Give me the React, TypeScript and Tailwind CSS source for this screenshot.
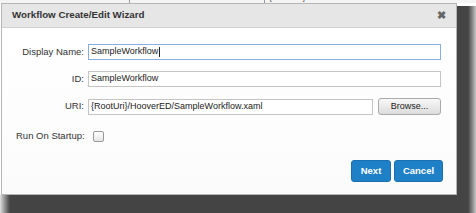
import React from "react";

const font = { fontFamily: '"Liberation Sans", Arial, sans-serif' };

function Field({ label, children }: { label: string; children: React.ReactNode }) {
  return (
    <div className="flex items-center">
      <label className="mr-[4px] w-[68px] shrink-0 whitespace-nowrap text-right text-[9.5px] text-[#333]">{label}</label>
      {children}
    </div>
  );
}

export default function App() {
  return (
    <div className="relative h-[213px] w-[476px] overflow-hidden bg-white" style={font}>
      {/* page behind the dialog */}
      <div className="absolute left-0 top-[-8px] flex h-[11px] w-full bg-[#f4f4f4] text-[9px] leading-[11px] text-[#555]">
        <div className="w-[130px] border-r border-[#999] pl-[4px]">SubscribeTest</div>
        <div className="w-[135px] border-r border-[#999] pl-[4px]">SubscribeTest</div>
        <div className="flex-1 pl-[4px]">{"{RootUri}/PerformanceTests/SubscribeTest.xaml"}</div>
      </div>

      {/* drop shadow */}
      <div className="absolute left-[10px] top-[6px] h-[230px] w-[458px] bg-[#444444]" />
      <div className="absolute left-[468px] top-[6px] h-[230px] w-[8px] bg-gradient-to-r from-[#444444] to-[#c8c8c8]" />
      <div className="absolute left-0 top-[195px] h-[20px] w-[10px] bg-gradient-to-r from-[#e0e0e0] to-[#444444]" />

      <div className="absolute left-[1px] top-[3px] flex h-[192px] w-[456px] flex-col border border-[#b5b5b5] bg-white">
        <div className="flex h-[24px] shrink-0 items-center justify-between border-b border-[#cfcfcf] bg-[#e6e6e6] pl-[10px] pr-[10px]">
          <span className="text-[9.75px] font-bold text-[#333]">Workflow Create/Edit Wizard</span>
          <span className="text-[11px] font-bold leading-none text-[#666]">✖</span>
        </div>

        <div className="flex flex-1 flex-col bg-gradient-to-b from-white to-[#fbfbfb] pl-[14px] pr-[15px] pt-[16px]">
          <div className="flex flex-col gap-[11px]">
            <Field label="Display Name:">
              <div className="flex h-[16px] flex-1 items-center border border-[#86aee3] bg-white px-[2px] text-[9px] text-[#222]">
                SampleWorkflow<span className="ml-[1px] inline-block h-[10px] w-px bg-[#222]" />
              </div>
            </Field>
            <Field label="ID:">
              <div className="flex h-[16px] flex-1 items-center border border-[#c4c4c4] bg-white px-[2px] text-[9px] text-[#222]">
                SampleWorkflow
              </div>
            </Field>
            <Field label="URI:">
              <div className="flex h-[16px] flex-1 items-center border border-[#c4c4c4] bg-white px-[2px] text-[9px] text-[#222]">
                {"{RootUri}/HooverED/SampleWorkflow.xaml"}
              </div>
              <button className="ml-[5px] h-[17px] w-[63px] rounded-[3px] border border-[#aaa] bg-gradient-to-b from-[#f8f8f8] to-[#dcdcdc] text-[9px] text-[#222]">
                Browse...
              </button>
            </Field>
          </div>

          <div className="mt-[15px] flex h-[13px] items-center">
            <span className="whitespace-nowrap text-[9.5px] text-[#333]">Run On Startup:</span>
            <span className="ml-[8px] inline-block h-[11px] w-[11px] rounded-[2px] border border-[#999] bg-gradient-to-b from-white to-[#e4e4e4]" />
          </div>

          <div className="mt-[17px] flex justify-end gap-[3px]">
            <button className="h-[22px] w-[40px] rounded-[3px] border border-[#1a6fae] bg-[#1e80c6] text-[9.5px] font-bold text-white">
              Next
            </button>
            <button className="mr-[-2px] h-[22px] w-[49px] rounded-[3px] border border-[#1a6fae] bg-[#1e80c6] text-[9.5px] font-bold text-white">
              Cancel
            </button>
          </div>
        </div>
      </div>
    </div>
  );
}
